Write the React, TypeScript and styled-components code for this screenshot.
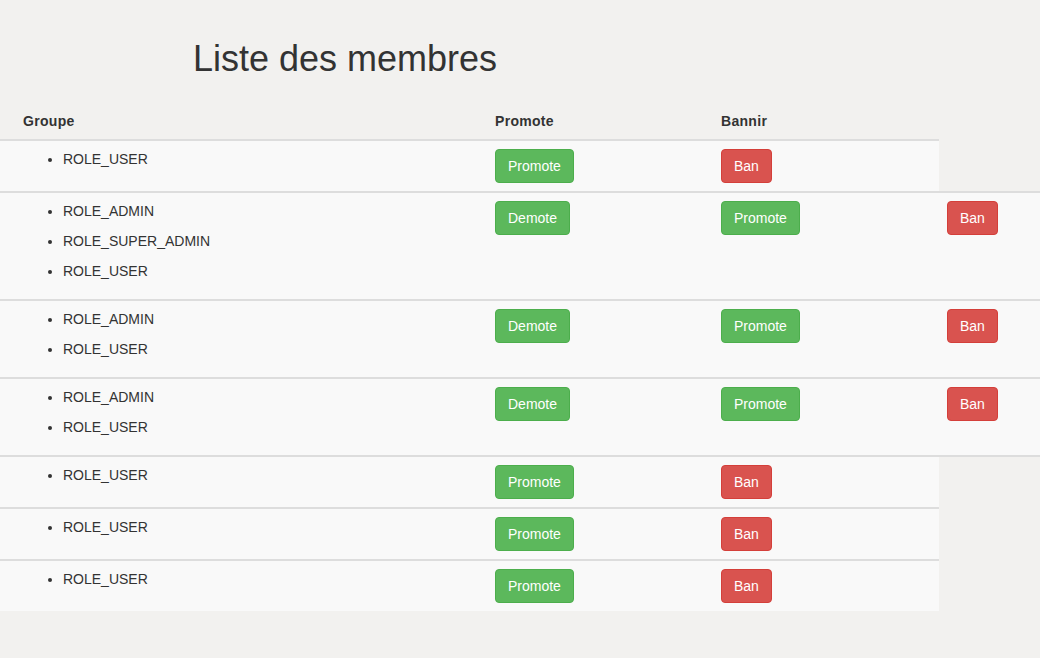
import styled, { createGlobalStyle } from "styled-components";

const GlobalStyle = createGlobalStyle`
  html, body {
    margin: 0;
    padding: 0;
    background: #f2f1ef;
    overflow: hidden;
  }
  body {
    font-family: "Liberation Sans", Arial, Helvetica, sans-serif;
    font-size: 14px;
    line-height: 20px;
    color: #333;
  }
  * {
    box-sizing: border-box;
  }
`;

const Page = styled.div`
  min-height: 100vh;
  background: #f2f1ef;
`;

const Title = styled.h1`
  margin: 0 0 24px;
  padding: 39px 0 0 193px;
  font-size: 36px;
  font-weight: 500;
  line-height: 1.1;
  color: #333;
`;

const Table = styled.div`
  width: 939px;
`;

const Row = styled.div<{ $head?: boolean; $topLine?: boolean; $bottomLine?: boolean }>`
  display: flex;
  width: max-content;
  background: ${(p) => (p.$head ? "transparent" : "#f9f9f9")};
  border-top: ${(p) => (p.$topLine ? "2px solid #ddd" : "none")};
  border-bottom: ${(p) => (p.$head || p.$bottomLine ? "2px solid #ddd" : "none")};
`;

const Cell = styled.div<{ $first?: boolean; $head?: boolean }>`
  width: ${(p) => (p.$first ? "487px" : "226px")};
  padding: 8px 8px 8px ${(p) => (p.$first ? "23px" : "8px")};
  font-weight: ${(p) => (p.$head ? 700 : 400)};
  letter-spacing: ${(p) => (p.$head ? "0.3px" : "normal")};
  line-height: 20px;
`;

const Roles = styled.ul`
  margin: 0 0 10px;
  padding-left: 40px;

  li + li {
    margin-top: 10px;
  }
`;

const Button = styled.button<{ $kind: "success" | "danger" }>`
  display: inline-block;
  padding: 6px 12px;
  font-family: inherit;
  font-size: 14px;
  line-height: 20px;
  color: #fff;
  border-radius: 4px;
  cursor: pointer;
  background: ${(p) => (p.$kind === "success" ? "#5cb85c" : "#d9534f")};
  border: 1px solid ${(p) => (p.$kind === "success" ? "#4cae4c" : "#d43f3a")};
`;

type Member = {
  roles: string[];
  admin: boolean;
};

const members: Member[] = [
  { roles: ["ROLE_USER"], admin: false },
  { roles: ["ROLE_ADMIN", "ROLE_SUPER_ADMIN", "ROLE_USER"], admin: true },
  { roles: ["ROLE_ADMIN", "ROLE_USER"], admin: true },
  { roles: ["ROLE_ADMIN", "ROLE_USER"], admin: true },
  { roles: ["ROLE_USER"], admin: false },
  { roles: ["ROLE_USER"], admin: false },
  { roles: ["ROLE_USER"], admin: false },
];

const App = () => {
  return (
    <Page>
      <GlobalStyle />
      <Title>Liste des membres</Title>
      <Table>
        <Row $head>
          <Cell $first $head>Groupe</Cell>
          <Cell $head>Promote</Cell>
          <Cell $head>Bannir</Cell>
        </Row>
        {members.map((m, i) => {
          const prev = members[i - 1];
          return (
            <Row
              key={i}
              $topLine={i > 0 && !prev.admin}
              $bottomLine={m.admin}
            >
              <Cell $first>
                <Roles>
                  {m.roles.map((r) => (
                    <li key={r}>{r}</li>
                  ))}
                </Roles>
              </Cell>
              {m.admin && (
                <Cell>
                  <Button $kind="success">Demote</Button>
                </Cell>
              )}
              <Cell>
                <Button $kind="success">Promote</Button>
              </Cell>
              <Cell>
                <Button $kind="danger">Ban</Button>
              </Cell>
            </Row>
          );
        })}
      </Table>
    </Page>
  );
};

export default App;
